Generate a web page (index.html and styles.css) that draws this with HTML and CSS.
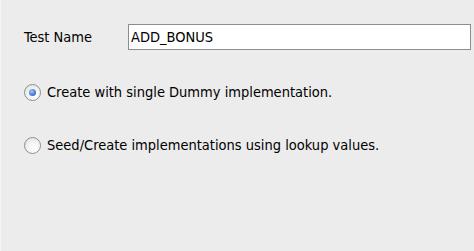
FILE: index.html
```html
<!DOCTYPE html>
<html>
<head>
<meta charset="utf-8">
<link rel="stylesheet" href="styles.css">
</head>
<body>
<div class="panel">
  <div class="name-row">
    <label class="name-label" for="testName">Test Name</label>
    <input class="name-input" id="testName" type="text" value="ADD_BONUS">
  </div>
  <div class="radio-row first">
    <span class="radio checked"></span>
    <span class="radio-text">Create with single Dummy implementation.</span>
  </div>
  <div class="radio-row second">
    <span class="radio"></span>
    <span class="radio-text">Seed/Create implementations using lookup values.</span>
  </div>
</div>
</body>
</html>
```

FILE: styles.css
```css
html, body {
  margin: 0;
  padding: 0;
  background: #ececec;
}

.panel {
  box-sizing: border-box;
  width: 474px;
  height: 251px;
  padding: 24px 3px 0 23px;
  background: #ececec;
  border-left: 1px solid #f6f6f6;
  font-family: "DejaVu Sans Condensed", "DejaVu Sans", sans-serif;
  font-stretch: condensed;
  font-size: 14.5px;
  color: #000;
  display: flex;
  flex-direction: column;
}

.name-row {
  display: flex;
  align-items: center;
  height: 26px;
}

.name-label {
  width: 104px;
  line-height: 17px;
}

.name-input {
  box-sizing: border-box;
  width: 343px;
  height: 26px;
  margin: 0;
  padding: 0 0 0 2px;
  border: 1px solid #8d8d8d;
  border-radius: 0;
  background: #fff;
  outline: none;
  font: inherit;
  font-stretch: condensed;
  color: #000;
  line-height: 17px;
}

.radio-row {
  display: flex;
  align-items: flex-start;
  gap: 6px;
}

.radio-row.first {
  margin-top: 34px;
}

.radio-row.second {
  margin-top: 36px;
}

.radio {
  box-sizing: border-box;
  width: 17px;
  height: 17px;
  border-radius: 50%;
  border: 1px solid #8e8e8e;
  background: radial-gradient(circle at 65% 70%, #ffffff 0%, #f4f4f4 45%, #dcdcdc 100%);
  display: flex;
  align-items: center;
  justify-content: center;
  flex: none;
}

.radio.checked::after {
  content: "";
  width: 7px;
  height: 7px;
  border-radius: 50%;
  background: radial-gradient(circle at 40% 35%, #a9c6f2 0%, #4d7fd6 55%, #2d57a8 100%);
}

.radio-text {
  line-height: 17px;
  margin-top: 0;
}
```
